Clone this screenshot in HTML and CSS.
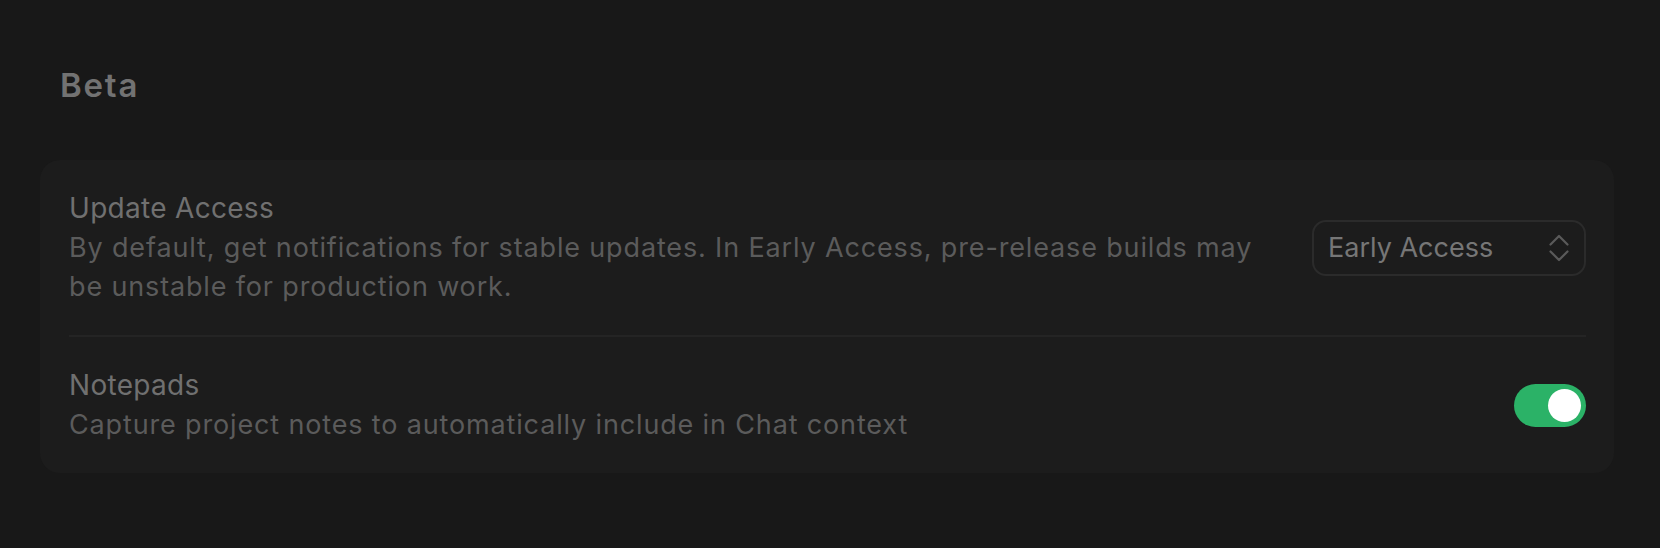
FILE: index.html
```html
<!DOCTYPE html>
<html lang="en">
<head>
    <meta charset="UTF-8">
    <meta name="viewport" content="width=device-width, initial-scale=1.0">
    <title>Beta Settings</title>
    <link rel="stylesheet" href="styles.css">
</head>
<body>
    <div class="page">
        <h2 class="section-title">Beta</h2>
        <div class="card">
            <div class="setting-row">
                <div class="setting-text">
                    <div class="setting-name">Update Access</div>
                    <div class="setting-desc">By default, get notifications for stable updates. In Early Access, pre-release builds may be unstable for production work.</div>
                </div>
                <button class="select">
                    <span class="select-value">Early Access</span>
                    <svg class="select-arrows" width="20" height="28" viewBox="0 0 20 28" fill="none">
                        <path d="M1.5 10.5 L10 2 L18.5 10.5" stroke="#5a5a5a" stroke-width="2.2" stroke-linecap="round" stroke-linejoin="round"/>
                        <path d="M1.5 17.5 L10 26 L18.5 17.5" stroke="#5a5a5a" stroke-width="2.2" stroke-linecap="round" stroke-linejoin="round"/>
                    </svg>
                </button>
            </div>
            <div class="setting-row">
                <div class="setting-text">
                    <div class="setting-name">Notepads</div>
                    <div class="setting-desc">Capture project notes to automatically include in Chat context</div>
                </div>
                <button class="toggle on"><span class="knob"></span></button>
            </div>
        </div>
    </div>
</body>
</html>
```

FILE: styles.css
```css
* {
    margin: 0;
    padding: 0;
    box-sizing: border-box;
}

body {
    font-family: 'Inter', 'Noto Sans', sans-serif;
    background: #181818;
    width: 1660px;
    height: 548px;
    overflow: hidden;
}

.page {
    padding: 62px 46px 0 40px;
}

.section-title {
    font-size: 33px;
    font-weight: 600;
    line-height: 46px;
    color: #727272;
    margin-left: 20px;
    margin-bottom: 52px;
    letter-spacing: 1.8px;
}

.card {
    background: #1c1c1c;
    border-radius: 20px;
    padding: 0 28px 0 29px;
}

.setting-row {
    display: flex;
    align-items: center;
    justify-content: space-between;
    padding: 29px 0;
}

.setting-row + .setting-row {
    border-top: 2px solid #242424;
}

.setting-text {
    max-width: 1200px;
}

.setting-name {
    font-size: 28px;
    line-height: 39px;
    color: #707070;
    letter-spacing: 0.3px;
}

.setting-desc {
    font-size: 27px;
    line-height: 39px;
    color: #5b5b5b;
    letter-spacing: 0.85px;
}

.select {
    width: 274px;
    height: 56px;
    background: transparent;
    border: 2px solid #2b2b2b;
    border-radius: 14px;
    display: flex;
    align-items: center;
    justify-content: space-between;
    padding: 0 15px 0 14px;
    font-family: inherit;
    cursor: pointer;
}

.select-value {
    font-size: 27px;
    color: #767676;
}

.toggle {
    position: relative;
    width: 72px;
    height: 43px;
    border: none;
    border-radius: 22px;
    background: #3a3a3a;
    cursor: pointer;
}

.toggle.on {
    background: #2bb267;
}

.knob {
    position: absolute;
    top: 5px;
    left: 5px;
    width: 33px;
    height: 33px;
    border-radius: 50%;
    background: #ffffff;
}

.toggle.on .knob {
    left: 34px;
}
```
